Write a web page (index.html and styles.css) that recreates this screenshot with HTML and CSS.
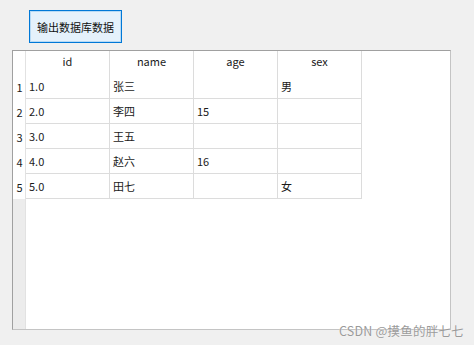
FILE: index.html
```html
<!DOCTYPE html>
<html>
<head>
<meta charset="utf-8">
<link rel="stylesheet" href="styles.css">
</head>
<body>
<div class="window">
  <button class="btn">输出数据库数据</button>
  <div class="frame">
    <div class="vheader">
      <div class="corner"></div>
      <div class="num">1</div>
      <div class="num">2</div>
      <div class="num">3</div>
      <div class="num">4</div>
      <div class="num">5</div>
      <div class="vfill"></div>
    </div>
    <div class="grid">
      <div class="hcell">id</div><div class="hcell">name</div><div class="hcell">age</div><div class="hcell">sex</div>
      <div class="cell">1.0</div><div class="cell">张三</div><div class="cell"></div><div class="cell">男</div>
      <div class="cell">2.0</div><div class="cell">李四</div><div class="cell">15</div><div class="cell"></div>
      <div class="cell">3.0</div><div class="cell">王五</div><div class="cell"></div><div class="cell"></div>
      <div class="cell">4.0</div><div class="cell">赵六</div><div class="cell">16</div><div class="cell"></div>
      <div class="cell">5.0</div><div class="cell">田七</div><div class="cell"></div><div class="cell">女</div>
    </div>
  </div>
  <div class="watermark">CSDN @摸鱼的胖七七</div>
</div>
</body>
</html>
```

FILE: styles.css
```css
html, body {
  margin: 0;
  padding: 0;
  background: #f0f0f0;
}
.window {
  position: relative;
  width: 474px;
  height: 345px;
  font-family: "Noto Sans CJK SC", "Noto Sans", sans-serif;
  font-size: 11px;
  color: #1a1a1a;
  display: flex;
  flex-direction: column;
  align-items: flex-start;
}
.btn {
  margin: 10px 0 0 29px;
  width: 93px;
  height: 33px;
  box-sizing: border-box;
  background: #e5f1fb;
  border: 1px solid #0078d7;
  box-shadow: inset 0 0 0 1px #b7daf5;
  font-family: inherit;
  font-size: 11px;
  color: #111;
  padding: 0;
}
.frame {
  margin: 7px 0 0 12px;
  width: 439px;
  height: 280px;
  box-sizing: border-box;
  border: 1px solid #a0a0a0;
  border-right-color: #c4c4c4;
  border-bottom-color: #c4c4c4;
  background: #fff;
  display: flex;
}
.vheader {
  width: 12px;
  display: flex;
  flex-direction: column;
  border-right: 1px solid #e2e2e2;
}
.corner {
  height: 23px;
  flex: none;
}
.num {
  height: 25px;
  flex: none;
  display: flex;
  align-items: center;
  justify-content: center;
  padding-left: 1px;
}
.vfill {
  flex: 1;
  background: #ececec;
}
.grid {
  display: grid;
  grid-template-columns: repeat(4, 84px);
  grid-auto-rows: 25px;
  grid-template-rows: 23px;
  align-self: flex-start;
}
.hcell {
  border-right: 1px solid #dcdcdc;
  display: flex;
  align-items: center;
  justify-content: center;
  padding-bottom: 4px;
  box-sizing: border-box;
}
.cell {
  border-right: 1px solid #dcdcdc;
  border-bottom: 1px solid #dcdcdc;
  display: flex;
  align-items: center;
  padding-left: 3px;
  box-sizing: border-box;
}
.watermark {
  position: absolute;
  left: 339px;
  top: 321px;
  font-size: 12.5px;
  color: #9a9a9a;
  letter-spacing: 0.2px;
  text-shadow: 0 0 1px #fff;
}
```
